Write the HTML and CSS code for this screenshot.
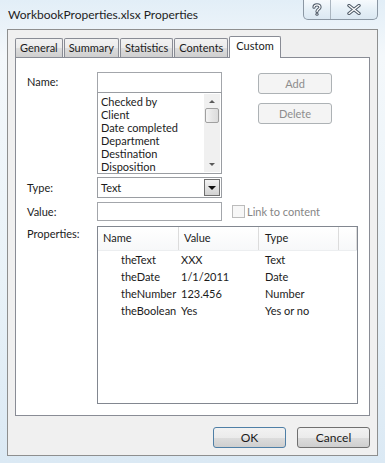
FILE: index.html
```html
<!DOCTYPE html>
<html lang="en">
<head>
    <meta charset="UTF-8">
    <meta name="viewport" content="width=device-width, initial-scale=1.0">
    <title>WorkbookProperties.xlsx Properties</title>
    <link rel="stylesheet" href="styles.css">
</head>
<body>
    <div class="window">
        <div class="titlebar">
            <span class="title">WorkbookProperties.xlsx Properties</span>
            <div class="caption-buttons">
                <div class="caption-btn help-btn">
                    <svg width="10" height="13" viewBox="0 0 10 13">
                        <path d="M2 4.2 C2 1.2 8 1.2 8 4.2 C8 6.4 5 6.2 5 8.6" fill="none" stroke="#4d5966" stroke-width="3.2" stroke-linecap="round"/>
                        <circle cx="5" cy="11.2" r="1.6" fill="#4d5966"/>
                        <path d="M2 4.2 C2 1.2 8 1.2 8 4.2 C8 6.4 5 6.2 5 8.6" fill="none" stroke="#fff" stroke-width="1.2" stroke-linecap="round"/>
                        <circle cx="5" cy="11.2" r="0.6" fill="#fff"/>
                    </svg>
                </div>
                <div class="caption-btn close-btn">
                    <svg width="14" height="11" viewBox="0 0 14 11">
                        <path d="M2 1.5 L12 9.5 M12 1.5 L2 9.5" stroke="#4d5966" stroke-width="3.4" stroke-linecap="round"/>
                        <path d="M2 1.5 L12 9.5 M12 1.5 L2 9.5" stroke="#fff" stroke-width="1.3" stroke-linecap="round"/>
                    </svg>
                </div>
            </div>
        </div>

        <div class="dialog">
            <div class="tabs">
                <div class="tab">General</div>
                <div class="tab">Summary</div>
                <div class="tab">Statistics</div>
                <div class="tab">Contents</div>
                <div class="tab active">Custom</div>
            </div>

            <div class="panel">
                <div class="form-row name-row">
                    <label class="field-label">Name:</label>
                    <div class="name-combo">
                        <div class="textbox name-box"></div>
                        <div class="listbox">
                            <ul class="list-items">
                                <li>Checked by</li>
                                <li>Client</li>
                                <li>Date completed</li>
                                <li>Department</li>
                                <li>Destination</li>
                                <li>Disposition</li>
                            </ul>
                            <div class="scrollbar">
                                <span class="arrow up"></span>
                                <span class="thumb"></span>
                                <span class="arrow down"></span>
                            </div>
                        </div>
                    </div>
                    <div class="side-buttons">
                        <button class="btn" disabled>Add</button>
                        <button class="btn" disabled>Delete</button>
                    </div>
                </div>

                <div class="form-row type-row">
                    <label class="field-label">Type:</label>
                    <div class="select">
                        <span class="select-text">Text</span>
                        <span class="drop-btn"><span class="caret"></span></span>
                    </div>
                </div>

                <div class="form-row value-row">
                    <label class="field-label">Value:</label>
                    <div class="textbox value-box"></div>
                    <label class="check">
                        <span class="checkbox"></span>
                        Link to content
                    </label>
                </div>

                <div class="form-row props-row">
                    <label class="field-label">Properties:</label>
                    <div class="listview">
                        <div class="lv-header">
                            <span class="col-name">Name</span>
                            <span class="col-value">Value</span>
                            <span class="col-type">Type</span>
                            <span class="col-fill"></span>
                        </div>
                        <div class="lv-row">
                            <span class="col-name">theText</span>
                            <span class="col-value">XXX</span>
                            <span class="col-type">Text</span>
                        </div>
                        <div class="lv-row">
                            <span class="col-name">theDate</span>
                            <span class="col-value">1/1/2011</span>
                            <span class="col-type">Date</span>
                        </div>
                        <div class="lv-row">
                            <span class="col-name">theNumber</span>
                            <span class="col-value">123.456</span>
                            <span class="col-type">Number</span>
                        </div>
                        <div class="lv-row">
                            <span class="col-name">theBoolean</span>
                            <span class="col-value">Yes</span>
                            <span class="col-type">Yes or no</span>
                        </div>
                    </div>
                </div>
            </div>

            <div class="footer">
                <button class="btn push default">OK</button>
                <button class="btn push">Cancel</button>
            </div>
        </div>
    </div>
</body>
</html>
```

FILE: styles.css
```css
html, body {
    margin: 0;
    padding: 0;
}

body {
    width: 385px;
    height: 463px;
    overflow: hidden;
    font-family: Lato, "Noto Sans", sans-serif;
    font-size: 11px;
    color: #1b1b1b;
}

.window {
    height: 463px;
    display: flex;
    flex-direction: column;
    background: linear-gradient(180deg, #e2eef7 0%, #f4f8fb 12%, #e9f2f8 60%, #dbe9f4 100%);
}

/* title bar */
.titlebar {
    height: 29px;
    display: flex;
    align-items: flex-start;
    flex: none;
}

.title {
    flex: 1;
    padding: 7px 0 0 8px;
    font-size: 12px;
    line-height: 16px;
    color: #1e1e1e;
}

.caption-buttons {
    display: flex;
    margin-right: 7px;
    height: 19px;
    border: 1px solid #8b97a3;
    border-top: none;
    border-radius: 0 0 5px 5px;
    background: linear-gradient(180deg, #f6fafd 0%, #e6f0f7 50%, #dbe8f2 100%);
    overflow: hidden;
}

.caption-btn {
    display: flex;
    align-items: center;
    justify-content: center;
}

.help-btn {
    width: 26px;
    border-right: 1px solid #aab5bf;
}

.close-btn {
    width: 46px;
}

/* dialog body */
.dialog {
    flex: 1;
    margin: 0 7px 7px 7px;
    border: 1px solid #8e8f8f;
    background: #f0f0f0;
    padding: 6px 7px 7px 7px;
    display: flex;
    flex-direction: column;
}

.tabs {
    display: flex;
    align-items: flex-end;
    height: 21px;
    flex: none;
}

.tab {
    height: 19px;
    line-height: 18px;
    padding: 0 4px;
    margin-right: 1px;
    border: 1px solid #898c95;
    border-bottom: none;
    border-radius: 2px 2px 0 0;
    background: linear-gradient(180deg, #f2f2f2 0%, #ebebeb 50%, #dddddd 51%, #cfcfcf 100%);
    box-sizing: border-box;
}

.tab.active {
    height: 22px;
    margin-bottom: -1px;
    padding: 0 6px;
    line-height: 17px;
    background: #fff;
    position: relative;
    z-index: 1;
}

.panel {
    height: 359px;
    box-sizing: border-box;
    border: 1px solid #898c95;
    background: #fff;
    padding: 14px 0 0 11px;
    display: flex;
    flex-direction: column;
}

.form-row {
    display: flex;
    align-items: flex-start;
}

.field-label {
    width: 70px;
    flex: none;
    line-height: 16px;
}

.name-row .field-label {
    padding-top: 2px;
}

.name-combo {
    width: 125px;
    display: flex;
    flex-direction: column;
}

.textbox {
    border: 1px solid #a3a6ab;
    background: #fff;
    box-sizing: border-box;
}

.name-box {
    height: 21px;
}

.listbox {
    height: 82px;
    margin-top: -1px;
    border: 1px solid #9a9da2;
    box-sizing: border-box;
    display: flex;
    overflow: hidden;
}

.list-items {
    flex: 1;
    list-style: none;
    margin: 0;
    padding: 2px 0 0 3px;
    line-height: 13px;
}

.scrollbar {
    width: 16px;
    margin: 1px 1px 1px 0;
    background: #f0f0f0;
    display: flex;
    flex-direction: column;
    align-items: center;
}

.arrow {
    width: 0;
    height: 0;
    border-left: 3px solid transparent;
    border-right: 3px solid transparent;
}

.arrow.up {
    margin-top: 6px;
    border-bottom: 3px solid #5a5a5a;
}

.arrow.down {
    margin-top: auto;
    margin-bottom: 6px;
    border-top: 3px solid #5a5a5a;
}

.thumb {
    width: 14px;
    height: 15px;
    margin-top: 5px;
    border: 1px solid #a0a0a0;
    border-radius: 2px;
    box-sizing: border-box;
    background: linear-gradient(90deg, #f4f4f4 0%, #e6e6e6 50%, #dcdcdc 100%);
}

.side-buttons {
    margin: 1px 0 0 36px;
    display: flex;
    flex-direction: column;
    gap: 9px;
}

.btn {
    width: 74px;
    height: 21px;
    padding: 0;
    font: inherit;
    color: #1b1b1b;
    border: 1px solid #707070;
    border-radius: 3px;
    background: linear-gradient(180deg, #f2f2f2 0%, #ebebeb 50%, #dddddd 51%, #cfcfcf 100%);
}

.btn:disabled {
    color: #8d8d8d;
    border-color: #adb2b5;
    background: #f4f4f4;
}

/* type / value */
.type-row {
    margin-top: 3px;
    align-items: center;
}

.select {
    width: 125px;
    height: 21px;
    box-sizing: border-box;
    border: 1px solid #9a9da2;
    display: flex;
    align-items: center;
    padding-left: 3px;
}

.select-text {
    flex: 1;
}

.drop-btn {
    width: 16px;
    height: 17px;
    margin-right: 1px;
    box-sizing: border-box;
    border: 1px solid #6f6f6f;
    background: linear-gradient(180deg, #f3f3f3 0%, #e2e2e2 50%, #d2d2d2 100%);
    display: flex;
    align-items: center;
    justify-content: center;
}

.caret {
    width: 0;
    height: 0;
    border-left: 4px solid transparent;
    border-right: 4px solid transparent;
    border-top: 4px solid #111;
}

.value-row {
    margin-top: 4px;
    align-items: center;
}

.value-box {
    width: 125px;
    height: 19px;
}

.check {
    display: flex;
    align-items: center;
    margin-left: 10px;
    color: #858585;
}

.checkbox {
    width: 13px;
    height: 13px;
    box-sizing: border-box;
    border: 1px solid #bcbcbc;
    background: #f7f7f7;
    margin-right: 2px;
}

/* properties list */
.props-row {
    margin-top: 5px;
}

.listview {
    width: 261px;
    height: 178px;
    box-sizing: border-box;
    border: 1px solid #828790;
}

.lv-header {
    display: flex;
    height: 24px;
    line-height: 22px;
    background: linear-gradient(180deg, #ffffff 0%, #f7f8f9 100%);
    border-bottom: 1px solid #eceef0;
    box-sizing: border-box;
}

.lv-header span {
    border-right: 1px solid #dcdcdc;
}

.lv-row {
    display: flex;
    line-height: 17px;
}

.col-name {
    width: 81px;
    box-sizing: border-box;
    padding-left: 23px;
    white-space: nowrap;
}

.col-value {
    width: 80px;
    box-sizing: border-box;
    padding-left: 2px;
}

.col-type {
    width: 80px;
    box-sizing: border-box;
    padding-left: 6px;
}

.lv-header .col-name {
    padding-left: 5px;
}

.lv-header .col-value {
    padding-left: 5px;
}

.lv-header .col-fill {
    flex: 1;
}

/* bottom buttons */
.footer {
    margin-top: 11px;
    display: flex;
    justify-content: flex-end;
    gap: 11px;
}

.push {
    width: 73px;
    font-size: 12px;
}

.push.default {
    border-color: #4f7fa6;
}
```
